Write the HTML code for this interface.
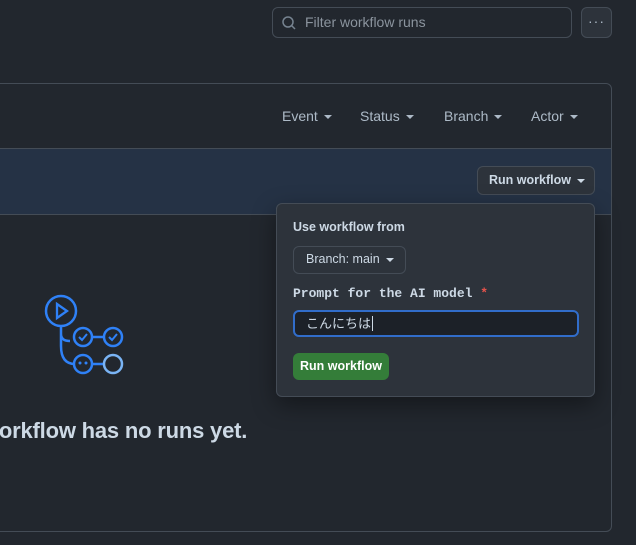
<!DOCTYPE html>
<html><head><meta charset="utf-8"><style>
*{box-sizing:border-box;margin:0;padding:0}
body{width:636px;height:545px;background:#22272e;font-family:"Liberation Sans","Noto Sans CJK JP",sans-serif;color:#adbac7;position:relative;overflow:hidden}
.abs{position:absolute}
.search{left:272px;top:7px;width:300px;height:31px;border:1px solid #444c56;border-radius:6px;background:#22272e;font-size:14px;color:#768390}
.dots{left:581px;top:7px;width:31px;height:31px;border:1px solid #444c56;border-radius:6px;background:#2d333b;color:#adbac7;text-align:center;font-size:14px;line-height:26px;letter-spacing:1px}
.card{left:-10px;top:83px;width:622px;height:449px;border:1px solid #444c56;border-radius:6px;background:#22272e}
.hdr{left:0;top:0;width:620px;height:65px;background:#22272e;border-bottom:1px solid #444c56;border-radius:6px 6px 0 0}
.band{left:0;top:65px;width:620px;height:66px;background:#253245;border-bottom:1px solid #444c56}
.f{top:108px;font-size:14px;color:#adbac7}
.car{display:inline-block;width:0;height:0;border-left:4px solid transparent;border-right:4px solid transparent;border-top:4px solid currentColor;vertical-align:middle;margin-left:6px}
.btn{border:1px solid #444c56;border-radius:6px;background:#2d333b;color:#cdd9e5;font-size:13px}
.pop{left:276px;top:203px;width:319px;height:194px;border:1px solid #444c56;border-radius:6px;background:#2d333b;box-shadow:0 8px 24px rgba(0,0,0,.4)}
</style></head><body>
<div class="abs search"><svg class="abs" style="left:8px;top:7px" width="16" height="16" viewBox="0 0 16 16"><circle cx="7" cy="7" r="5" fill="none" stroke="#768390" stroke-width="1.5"/><path d="M10.5 10.5L14 14" stroke="#768390" stroke-width="1.5"/></svg><span class="abs" style="left:32px;top:6px;color:#8b949e">Filter workflow runs</span></div>
<div class="abs dots">···</div>
<div class="abs card">
<div class="abs hdr"></div>
<div class="abs band"></div>
</div>
<div class="abs f" style="left:282px">Event<span class="car"></span></div>
<div class="abs f" style="left:360px">Status<span class="car"></span></div>
<div class="abs f" style="left:444px">Branch<span class="car"></span></div>
<div class="abs f" style="left:531px">Actor<span class="car"></span></div>
<div class="abs btn" style="left:477px;top:166px;width:118px;height:29px;line-height:26px;padding-left:11px;font-weight:bold;font-size:12.5px">Run workflow<span class="car"></span></div>
<svg class="abs" style="left:40px;top:290px" width="90" height="90" viewBox="0 0 90 90">
<g fill="none" stroke="#2f81f7" stroke-width="2.5">
<circle cx="21" cy="21" r="15"/><path d="M17 14v14l10-7z" stroke-width="2.3"/>
<path d="M21 36v20q0 18 14 18M21 44q0 7 9 7"/>
<circle cx="43" cy="47" r="9"/><circle cx="73" cy="47" r="9"/><path d="M52 47h12"/>
<path d="M39 47l3 3 5-6M69 47l3 3 5-6" stroke-width="2"/>
<circle cx="43" cy="74" r="9"/><path d="M52 74h12"/>
</g>
<circle cx="40" cy="73" r="1.5" fill="#2f81f7"/><circle cx="46" cy="73" r="1.5" fill="#2f81f7"/>
<circle cx="73" cy="74" r="9" fill="none" stroke="#7ab4f5" stroke-width="2.5"/>
</svg>
<div class="abs" style="left:-18px;top:418px;font-size:22px;font-weight:bold;color:#cdd9e5;letter-spacing:-0.2px">workflow has no runs yet.</div>
<div class="abs pop">
<div class="abs" style="left:16px;top:16px;font-size:12.5px;font-weight:bold;color:#cdd9e5">Use workflow from</div>
<div class="abs btn" style="left:16px;top:42px;width:113px;height:28px;line-height:25px;padding-left:12px;background:#2d333b;font-size:12.5px">Branch: main<span class="car"></span></div>
<div class="abs" style="left:16px;top:82px;font-family:'Liberation Mono',monospace;font-size:13px;font-weight:bold;color:#cdd9e5">Prompt for the AI model <span style="color:#e5534b">*</span></div>
<div class="abs" style="left:16px;top:106px;width:286px;height:27px;border:2px solid #316dca;border-radius:6px;background:#1c2128;font-size:13px;color:#cdd9e5;padding:3px 11px;line-height:18px">こんにちは<span style="border-left:1px solid #cdd9e5;margin-left:1px"></span></div>
<div class="abs" style="left:16px;top:149px;width:96px;height:27px;border-radius:6px;background:#347d39;color:#fff;font-size:12.5px;font-weight:bold;line-height:27px;text-align:center">Run workflow</div>
</div>
</body></html>
